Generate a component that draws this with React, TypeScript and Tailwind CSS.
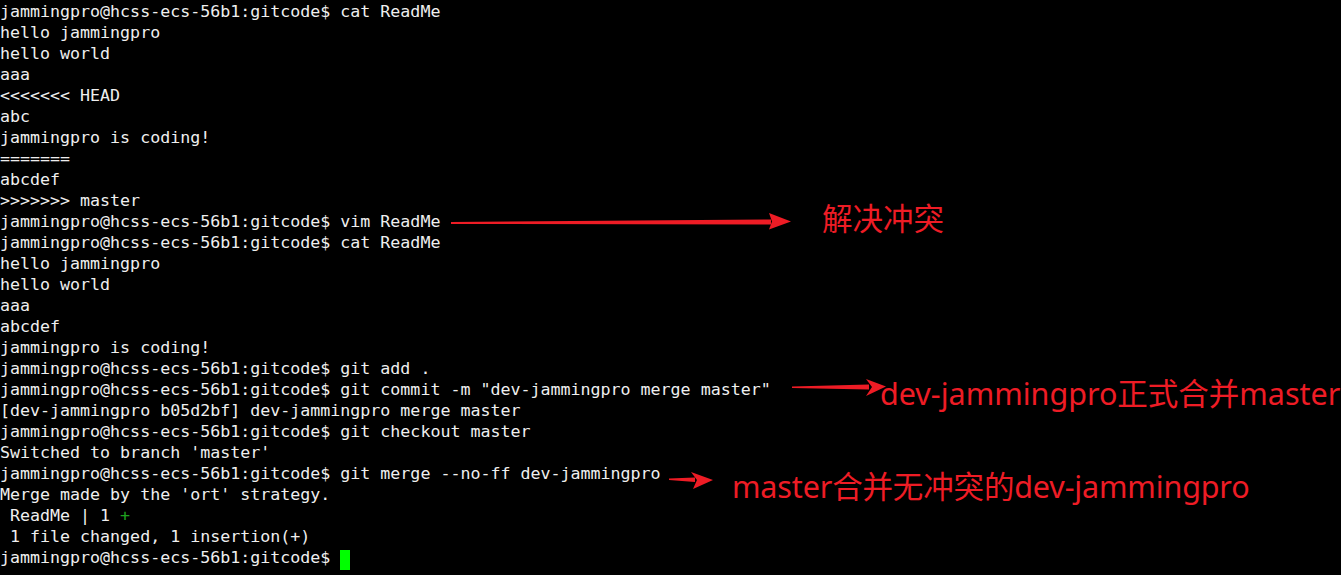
import React from 'react';

const PROMPT = 'jammingpro@hcss-ecs-56b1:gitcode$ ';

const lines: React.ReactNode[] = [
  PROMPT + 'cat ReadMe',
  'hello jammingpro',
  'hello world',
  'aaa',
  '<<<<<<< HEAD',
  'abc',
  'jammingpro is coding!',
  '=======',
  'abcdef',
  '>>>>>>> master',
  PROMPT + 'vim ReadMe',
  PROMPT + 'cat ReadMe',
  'hello jammingpro',
  'hello world',
  'aaa',
  'abcdef',
  'jammingpro is coding!',
  PROMPT + 'git add .',
  PROMPT + 'git commit -m "dev-jammingpro merge master"',
  '[dev-jammingpro b05d2bf] dev-jammingpro merge master',
  PROMPT + 'git checkout master',
  "Switched to branch 'master'",
  PROMPT + 'git merge --no-ff dev-jammingpro',
  "Merge made by the 'ort' strategy.",
  <>
    {' ReadMe | 1 '}
    <span className="text-[#1fa01f]">+</span>
  </>,
  ' 1 file changed, 1 insertion(+)',
  <>
    {PROMPT}
    <span className="inline-block h-[20px] w-[10px] translate-y-[3px] bg-[#00ff00] align-top" />
  </>,
];

const notes = [
  { text: '解决冲突', className: 'left-[822px] top-[201px]' },
  { text: 'dev-jammingpro正式合并master', className: 'left-[880px] top-[376px]' },
  { text: 'master合并无冲突的dev-jammingpro', className: 'left-[732px] top-[469px] tracking-[-0.15px]' },
];

function Arrows() {
  return (
    <svg className="pointer-events-none absolute left-0 top-0" width={1341} height={575} viewBox="0 0 1341 575">
      <g fill="#ee1c25">
        {/* vim ReadMe -> 解决冲突 */}
        <polygon points="451,222 771,219.5 771,224.5 451,224" />
        <polygon points="769,213 791,221.5 769,229.5 772,221.5" />
        {/* commit -> 正式合并 */}
        <polygon points="792,386.5 869,384.5 869,389.5 792,388" />
        <polygon points="866,379 886,386.5 866,396 872,387" />
        {/* merge --no-ff -> 无冲突 */}
        <polygon points="669,478.5 695,477.5 695,482 669,480" />
        <polygon points="691,472 713,480 693,489 697,480" />
      </g>
    </svg>
  );
}

export default function App() {
  return (
    <div className="relative h-[575px] w-[1341px] overflow-hidden bg-black">
      <div className="flex flex-col pt-[1px] font-['DejaVu_Sans_Mono',monospace] text-[16.64px] leading-[21px] text-[#efefef]">
        {lines.map((line, i) => (
          <div key={i} className="h-[21px] whitespace-pre">
            {line}
          </div>
        ))}
      </div>
      <Arrows />
      {notes.map((n) => (
        <div
          key={n.text}
          className={`absolute whitespace-nowrap font-['Noto_Sans','Noto_Sans_CJK_SC',sans-serif] text-[30.5px] leading-[34px] text-[#ee1c25] ${n.className}`}
        >
          {n.text}
        </div>
      ))}
    </div>
  );
}
